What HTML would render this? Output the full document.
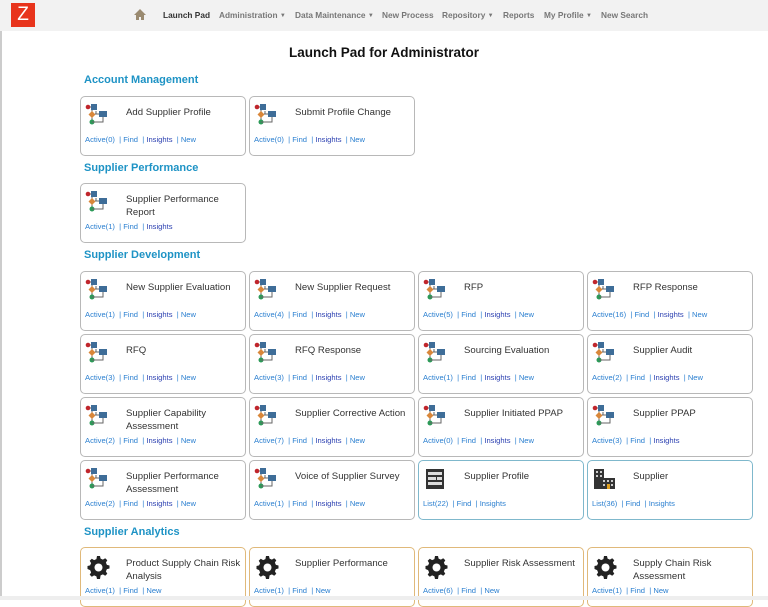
<!DOCTYPE html>
<html><head><meta charset="utf-8"><style>
*{margin:0;padding:0;box-sizing:border-box}
body{width:768px;height:600px;overflow:hidden;background:#fff;font-family:"Liberation Sans",Arial,sans-serif;position:relative}
.nav{position:absolute;left:0;top:0;width:768px;height:31px;background:#f2f2f2}
.logo{position:absolute;left:11px;top:3px;width:24px;height:24px;background:#e8341c;color:#fff;font-size:19px;text-align:center;line-height:24px}
.nav span{position:absolute;top:10px;font-size:8.3px;color:#777;font-weight:bold}
.nav span.a{color:#333}
.car{font-size:6px;vertical-align:1px}
.lb{position:absolute;left:0;top:0;width:2px;height:600px;background:#ccc}
h1{position:absolute;left:0;width:768px;text-align:center;top:45px;font-size:13.5px;color:#111}
h2{position:absolute;left:84px;font-size:11px;color:#1e93c5;font-weight:bold}
.c{position:absolute;width:166px;height:60px;border:1px solid #b8b8b8;border-radius:5px;background:#fff}
.c.b{border-color:#7fb8cc}
.c.o{border-color:#e0b97a;height:60px}
.t{position:absolute;left:45px;top:10px;font-size:9.6px;color:#333;line-height:12.5px;width:120px}
.l{position:absolute;left:4px;top:38px;font-size:7.6px;color:#2a7fd0;white-space:nowrap}
.l i{font-style:normal;color:#2a3fb0}
.ic{position:absolute;left:4px;top:6px}
.bot{position:absolute;left:0;top:596px;width:768px;height:4px;background:#eee}
</style></head><body>
<div class="lb"></div>
<div class="nav">
<div class="logo">Z</div>
<svg style="position:absolute;left:133px;top:8px" width="14" height="13" viewBox="0 0 14 13"><path d="M7 1L1 7h2v5h3V9h2v3h3V7h2z" fill="#9a8a70"/></svg>
<span class="a" style="left:163px">Launch Pad</span>
<span style="left:219px">Administration <b class="car">▼</b></span>
<span style="left:295px">Data Maintenance <b class="car">▼</b></span>
<span style="left:382px">New Process</span>
<span style="left:442px">Repository <b class="car">▼</b></span>
<span style="left:503px">Reports</span>
<span style="left:544px">My Profile <b class="car">▼</b></span>
<span style="left:601px">New Search</span>
</div>
<h1>Launch Pad for Administrator</h1>
<h2 style="top:74px">Account Management</h2>
<h2 style="top:162px">Supplier Performance</h2>
<h2 style="top:249px">Supplier Development</h2>
<h2 style="top:526px">Supplier Analytics</h2>

<svg width="0" height="0" style="position:absolute"><defs>
<g id="fl"><path d="M3 4H8M7 7V14M7 14V19M10 11H17M11 8v3" stroke="#666" stroke-width="1" fill="none"/><circle cx="3" cy="4" r="2.3" fill="#c0262c"/><rect x="6" y="1" width="6" height="6" fill="#3e6d98"/><path d="M7 8l3.5 3.5L7 15 3.5 11.5z" fill="#d9873a"/><rect x="14" y="8" width="8" height="6" fill="#3e6d98"/><circle cx="7" cy="19" r="2.5" fill="#2c9a58"/><path d="M7 19H18V14" stroke="#666" fill="none"/></g>
<g id="gr"><path d="M12 2h3l.6 2.6 2.3 1 2.3-1.4 2.1 2.1-1.4 2.3 1 2.3 2.6.6v3l-2.6.6-1 2.3 1.4 2.3-2.1 2.1-2.3-1.4-2.3 1L15 25h-3l-.6-2.6-2.3-1-2.3 1.4-2.1-2.1 1.4-2.3-1-2.3L2.5 15v-3l2.6-.6 1-2.3L4.7 6.8l2.1-2.1 2.3 1.4 2.3-1z" fill="#222"/><circle cx="13.5" cy="13.5" r="4" fill="#fff"/></g>
</defs></svg>

<div class="c" style="left:80px;top:96px"><svg class="ic" width="24" height="24"><use href="#fl"/></svg><div class="t">Add Supplier Profile</div><div class="l">Active(0) &nbsp;| Find &nbsp;| <i>Insights</i> &nbsp;| New</div></div>
<div class="c" style="left:249px;top:96px"><svg class="ic" width="24" height="24"><use href="#fl"/></svg><div class="t">Submit Profile Change</div><div class="l">Active(0) &nbsp;| Find &nbsp;| <i>Insights</i> &nbsp;| New</div></div>
<div class="c" style="left:80px;top:183px"><svg class="ic" width="24" height="24"><use href="#fl"/></svg><div class="t">Supplier Performance Report</div><div class="l">Active(1) &nbsp;| Find &nbsp;| <i>Insights</i></div></div>
<div class="c" style="left:80px;top:271px"><svg class="ic" width="24" height="24"><use href="#fl"/></svg><div class="t">New Supplier Evaluation</div><div class="l">Active(1) &nbsp;| Find &nbsp;| <i>Insights</i> &nbsp;| New</div></div>
<div class="c" style="left:249px;top:271px"><svg class="ic" width="24" height="24"><use href="#fl"/></svg><div class="t">New Supplier Request</div><div class="l">Active(4) &nbsp;| Find &nbsp;| <i>Insights</i> &nbsp;| New</div></div>
<div class="c" style="left:418px;top:271px"><svg class="ic" width="24" height="24"><use href="#fl"/></svg><div class="t">RFP</div><div class="l">Active(5) &nbsp;| Find &nbsp;| <i>Insights</i> &nbsp;| New</div></div>
<div class="c" style="left:587px;top:271px"><svg class="ic" width="24" height="24"><use href="#fl"/></svg><div class="t">RFP Response</div><div class="l">Active(16) &nbsp;| Find &nbsp;| <i>Insights</i> &nbsp;| New</div></div>
<div class="c" style="left:80px;top:334px"><svg class="ic" width="24" height="24"><use href="#fl"/></svg><div class="t">RFQ</div><div class="l">Active(3) &nbsp;| Find &nbsp;| <i>Insights</i> &nbsp;| New</div></div>
<div class="c" style="left:249px;top:334px"><svg class="ic" width="24" height="24"><use href="#fl"/></svg><div class="t">RFQ Response</div><div class="l">Active(3) &nbsp;| Find &nbsp;| <i>Insights</i> &nbsp;| New</div></div>
<div class="c" style="left:418px;top:334px"><svg class="ic" width="24" height="24"><use href="#fl"/></svg><div class="t">Sourcing Evaluation</div><div class="l">Active(1) &nbsp;| Find &nbsp;| <i>Insights</i> &nbsp;| New</div></div>
<div class="c" style="left:587px;top:334px"><svg class="ic" width="24" height="24"><use href="#fl"/></svg><div class="t">Supplier Audit</div><div class="l">Active(2) &nbsp;| Find &nbsp;| <i>Insights</i> &nbsp;| New</div></div>
<div class="c" style="left:80px;top:397px"><svg class="ic" width="24" height="24"><use href="#fl"/></svg><div class="t">Supplier Capability Assessment</div><div class="l">Active(2) &nbsp;| Find &nbsp;| <i>Insights</i> &nbsp;| New</div></div>
<div class="c" style="left:249px;top:397px"><svg class="ic" width="24" height="24"><use href="#fl"/></svg><div class="t">Supplier Corrective Action</div><div class="l">Active(7) &nbsp;| Find &nbsp;| <i>Insights</i> &nbsp;| New</div></div>
<div class="c" style="left:418px;top:397px"><svg class="ic" width="24" height="24"><use href="#fl"/></svg><div class="t">Supplier Initiated PPAP</div><div class="l">Active(0) &nbsp;| Find &nbsp;| <i>Insights</i> &nbsp;| New</div></div>
<div class="c" style="left:587px;top:397px"><svg class="ic" width="24" height="24"><use href="#fl"/></svg><div class="t">Supplier PPAP</div><div class="l">Active(3) &nbsp;| Find &nbsp;| <i>Insights</i></div></div>
<div class="c" style="left:80px;top:460px"><svg class="ic" width="24" height="24"><use href="#fl"/></svg><div class="t">Supplier Performance Assessment</div><div class="l">Active(2) &nbsp;| Find &nbsp;| <i>Insights</i> &nbsp;| New</div></div>
<div class="c" style="left:249px;top:460px"><svg class="ic" width="24" height="24"><use href="#fl"/></svg><div class="t">Voice of Supplier Survey</div><div class="l">Active(1) &nbsp;| Find &nbsp;| <i>Insights</i> &nbsp;| New</div></div>
<div class="c b" style="left:418px;top:460px"><svg class="ic" width="24" height="24" viewBox="0 0 24 24"><rect x="3" y="2" width="18" height="20" fill="#333"/><path d="M5 5h14v3H5zM5 10h8v3H5zM14 10h5v3h-5zM5 15h14v3H5z" fill="#ddd"/></svg><div class="t">Supplier Profile</div><div class="l">List(22) &nbsp;| Find &nbsp;| Insights</div></div>
<div class="c b" style="left:587px;top:460px"><svg class="ic" width="24" height="24" viewBox="0 0 24 24"><rect x="2" y="2" width="10" height="20" fill="#333"/><rect x="9" y="11" width="14" height="11" fill="#333"/><path d="M4 4h2v2H4zM8 4h2v2H8zM4 8h2v2H4zM8 8h2v2H8zM11 13h2v2h-2zM15 13h2v2h-2zM19 13h2v2h-2zM11 17h2v2h-2zM19 17h2v2h-2z" fill="#ccc"/><rect x="15" y="17" width="3" height="5" fill="#e0a020"/></svg><div class="t">Supplier</div><div class="l">List(36) &nbsp;| Find &nbsp;| Insights</div></div>
<div class="c o" style="left:80px;top:547px"><svg class="ic" width="27" height="27"><use href="#gr"/></svg><div class="t">Product Supply Chain Risk Analysis</div><div class="l">Active(1) &nbsp;| Find &nbsp;| New</div></div>
<div class="c o" style="left:249px;top:547px"><svg class="ic" width="27" height="27"><use href="#gr"/></svg><div class="t">Supplier Performance</div><div class="l">Active(1) &nbsp;| Find &nbsp;| New</div></div>
<div class="c o" style="left:418px;top:547px"><svg class="ic" width="27" height="27"><use href="#gr"/></svg><div class="t">Supplier Risk Assessment</div><div class="l">Active(6) &nbsp;| Find &nbsp;| New</div></div>
<div class="c o" style="left:587px;top:547px"><svg class="ic" width="27" height="27"><use href="#gr"/></svg><div class="t">Supply Chain Risk Assessment</div><div class="l">Active(1) &nbsp;| Find &nbsp;| New</div></div>
<div class="bot"></div>
</body></html>
